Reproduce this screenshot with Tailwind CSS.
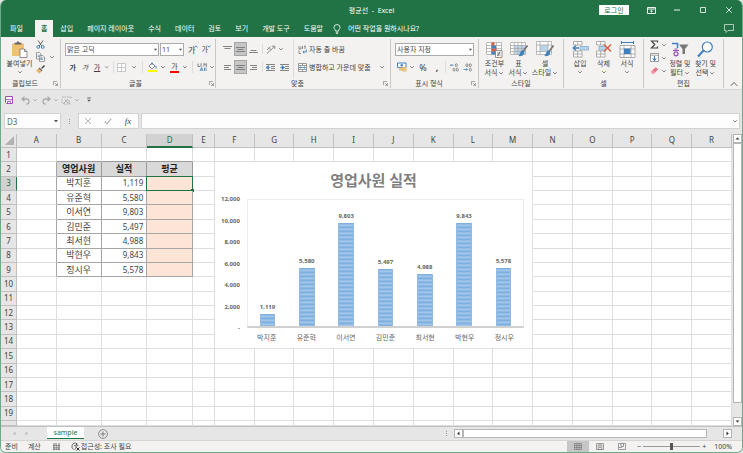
<!DOCTYPE html>
<html lang="ko">
<head>
<meta charset="utf-8">
<title>평균선 - Excel</title>
<script src="https://cdn.jsdelivr.net/npm/@tailwindcss/browser@4"></script>
</head>
<body class="h-screen overflow-hidden bg-[#dfe5e2] font-['Noto_Sans','Noto_Sans_CJK_KR',sans-serif] text-[7px] leading-[9px] text-[#444]">
<svg class="hidden">
  <symbol id="chev" viewBox="0 0 6 6"><path d="M1.2 2.2 3 4l1.8-1.8" fill="none" stroke="#777" stroke-width=".9"/></symbol>
  <symbol id="tri" viewBox="0 0 6 6"><path d="M1 2h4L3 4.500z" fill="#555"/></symbol>
  <symbol id="launch" viewBox="0 0 6 6"><path d="M.5 5V.500H5M2.500 2.500l2.500 2.500M5.400 2.500v3H2.500" fill="none" stroke="#777" stroke-width=".8"/></symbol>
  <symbol id="brush" viewBox="0 0 10 12"><path d="M9.500.5 5 6.500" stroke="#777" stroke-width="1.800"/><path d="M4.200 5.200C2 6 2.500 9 .3 11c3 .6 6-.6 6-4z" fill="#3f80bd"/></symbol>
</svg>
<div class="flex h-full flex-col overflow-hidden rounded-md border-x border-b border-[#6fa98c] bg-[#e6e6e6]">

  <header class="-mx-px bg-[#217346] text-white">
    <div class="grid h-5 grid-cols-[1fr_auto_1fr] items-center">
      <span></span>
      <h1 class="whitespace-pre">평균선  -  Excel</h1>
      <div class="flex items-center justify-end">
        <button class="mr-3 h-[10px] w-[30px] bg-white text-[#217346]">로그인</button>
        <button aria-label="리본 표시 옵션" class="grid h-4 w-5 place-items-center"><svg class="h-[7px] w-[9px]" viewBox="0 0 9 7"><path d="M.5.500h8v6h-8zM.5 2h8M4.500 5.500v-2M3.300 4.300l1.200-1 1.200 1" fill="none" stroke="#fff" stroke-width=".9"/></svg></button>
        <button aria-label="최소화" class="ml-[6px] grid h-4 w-5 place-items-center"><svg class="h-2 w-2" viewBox="0 0 8 8"><path d="M1 4h6" stroke="#fff" stroke-width=".9"/></svg></button>
        <button aria-label="최대화" class="ml-[6px] grid h-4 w-5 place-items-center"><svg class="h-2 w-2" viewBox="0 0 8 8"><path d="M1.500 1.500h5v5h-5z" fill="none" stroke="#fff" stroke-width=".8"/></svg></button>
        <button aria-label="닫기" class="ml-[6px] mr-1 grid h-4 w-5 place-items-center"><svg class="h-2 w-2" viewBox="0 0 8 8"><path d="m1.200 1.200 5.600 5.600m0-5.600L1.200 6.800" stroke="#fff" stroke-width=".8"/></svg></button>
      </div>
    </div>
    <nav class="flex h-[17px] items-stretch pl-[3px]">
      <button class="px-[7px]">파일</button>
      <button class="ml-[5px] bg-[#f3f2f1] px-[6px] font-bold text-[#217346]">홈</button>
      <button class="px-[7px]">삽입</button>
      <button class="px-[7px]">페이지 레이아웃</button>
      <button class="px-[7px]">수식</button>
      <button class="px-[7px]">데이터</button>
      <button class="px-[7px]">검토</button>
      <button class="px-[7px]">보기</button>
      <button class="px-[7px]">개발 도구</button>
      <button class="px-[7px]">도움말</button>
      <button class="ml-[3px] flex items-center gap-[7px]"><svg class="h-[10px] w-[8px]" viewBox="0 0 8 10"><path d="M2.500 7C2.500 5.500 1 5.200 1 3.500a3 3 0 0 1 6 0C7 5.200 5.500 5.500 5.500 7zM2.700 8.200h2.600M3 9.400h2" fill="none" stroke="#fff" stroke-width=".8"/></svg>어떤 작업을 원하시나요?</button>
      <button aria-label="메모" class="mr-2 ml-auto grid w-[12px] place-items-center"><svg class="h-[9px] w-[10px]" viewBox="0 0 10 9"><path d="M.5.500h9v6H4l-2 2v-2H.5z" fill="none" stroke="#cfe3d8" stroke-width=".8"/></svg></button>
    </nav>
  </header>

  <section aria-label="리본" class="flex h-[53px] shrink-0 items-stretch border-b border-[#d5d5d5] bg-[#f3f2f1] pt-[2px] pb-px whitespace-nowrap">
    <!-- 클립보드 -->
    <div class="flex w-[60px] shrink-0 flex-col border-r border-[#c8c8c8]">
      <div class="flex flex-1 pl-1">
        <button class="flex w-[29px] flex-col items-center pt-[2px]">
          <svg class="mb-px h-[17px] w-[17px]" viewBox="0 0 17 17"><path d="M1 2.500h12V15H1z" fill="#eec071"/><path d="M3.500 3.500V1.800H5.500C5.800 0 8.200 0 8.500 1.800h2v1.700z" fill="#666"/><path d="M9 8h4.500L16 10.500V16.500H9z" fill="#fff" stroke="#777" stroke-width=".8"/><path d="M13.500 8v2.500H16" fill="none" stroke="#777" stroke-width=".8"/></svg>
          <span>붙여넣기</span>
          <svg class="mt-px h-[6px] w-[6px]"><use href="#chev"/></svg>
        </button>
        <div class="ml-[2px] flex flex-col gap-[3px] pt-[1px]">
          <button aria-label="잘라내기" class="h-[9px] w-[9px]"><svg viewBox="0 0 9 9"><path d="m2 .5 3.800 5.500M7 .5 3.200 6" stroke="#555" stroke-width=".9"/><circle cx="2.300" cy="7" r="1.400" fill="none" stroke="#3f80bd"/><circle cx="6.700" cy="7" r="1.400" fill="none" stroke="#3f80bd"/></svg></button>
          <button aria-label="복사" class="flex items-center gap-1"><svg class="h-[10px] w-[9px]" viewBox="0 0 9 10"><path d="M.5.500h3L5 2v5H.5zM3.500 3.500h3L8.500 5v4.500h-5z" fill="#fff" stroke="#777" stroke-width=".7"/><path d="M1.500 3h2M1.500 4.500h1.500M4.700 6h2.500M4.700 7.500h2.500" stroke="#3f80bd" stroke-width=".7"/></svg><svg class="h-[6px] w-[6px]"><use href="#chev"/></svg></button>
          <button aria-label="서식 복사" class="h-[9px] w-[9px]"><svg viewBox="0 0 9 9"><path d="M8.500.5 5.500 3.500" stroke="#555" stroke-width="1.600"/><path d="m3.500 2.500 3 3-1 1-3-3z" fill="#666"/><path d="m2.300 3.500 3 3L3.500 8.800.2 5.500z" fill="#e9b25e"/></svg></button>
        </div>
      </div>
      <div class="flex h-[9px] items-center"><span class="flex-1 pr-1 text-center">클립보드</span><svg class="mr-[2px] h-[5px] w-[5px]"><use href="#launch"/></svg></div>
    </div>
    <!-- 글꼴 -->
    <div class="flex w-[155px] shrink-0 flex-col border-r border-[#c8c8c8]">
      <div class="flex h-[20px] items-center pt-[1px] pl-1">
        <label class="relative"><select aria-label="글꼴" class="block h-[13px] w-[94px] appearance-none border border-[#ababab] bg-white pl-[1px]"><option>맑은 고딕</option></select><svg class="pointer-events-none absolute top-[4px] right-[1px] h-[5px] w-[5px]"><use href="#tri"/></svg></label>
        <label class="relative ml-[1px]"><select aria-label="글꼴 크기" class="block h-[13px] w-6 appearance-none border border-[#ababab] bg-white pl-[1px]"><option>11</option></select><svg class="pointer-events-none absolute top-[4px] right-[1px] h-[5px] w-[5px]"><use href="#tri"/></svg></label>
        <button class="ml-[4px] flex items-start text-[8px]" aria-label="글꼴 크기 크게">가<svg class="-ml-px h-[3px] w-[4px]" viewBox="0 0 4 3"><path d="M.5 2.500 2 .8l1.500 1.700" fill="none" stroke="#3f80bd" stroke-width=".9"/></svg></button>
        <button class="ml-[3px] flex items-start" aria-label="글꼴 크기 작게">가<svg class="-ml-px h-[3px] w-[4px]" viewBox="0 0 4 3"><path d="M.5.500 2 2.200 3.500.5" fill="none" stroke="#3f80bd" stroke-width=".9"/></svg></button>
      </div>
      <div class="flex h-[16px] items-center pl-[6px]">
        <button class="w-[13px] font-bold">가</button>
        <button class="w-[14px] italic">가</button>
        <button class="w-[13px] underline">가</button>
        <svg class="mx-[1px] h-[6px] w-[6px]"><use href="#chev"/></svg>
        <span class="mx-[3px] h-3 w-px bg-[#dcdcdc]"></span>
        <button aria-label="테두리" class="flex items-center gap-[5px]"><svg class="h-[9px] w-[9px]" viewBox="0 0 9 9"><path d="M.5.500h8v8h-8zM4.500.5v8M.5 4.500h8" fill="#fff" stroke="#b5b5b5" stroke-width=".7"/></svg><svg class="h-[6px] w-[6px]"><use href="#chev"/></svg></button>
        <span class="mx-[5px] h-3 w-px bg-[#dcdcdc]"></span>
        <button aria-label="채우기 색" class="flex items-center gap-[3px]"><svg class="h-[10px] w-[9px]" viewBox="0 0 9 10"><path d="m4 1 3 3-3 3-3-3z" fill="#fff" stroke="#666" stroke-width=".8"/><path d="M4 3V.5M7 3.500c1 1 1.200 1.700 1.200 3" fill="none" stroke="#3f80bd"/><path d="M0 8h9v2H0z" fill="#ff0"/></svg><svg class="h-[6px] w-[6px]"><use href="#chev"/></svg></button>
        <button aria-label="글꼴 색" class="ml-1 flex items-center gap-[3px]"><span class="flex h-[11px] w-[9px] items-center justify-center border-b-2 border-[#f00]">가</span><svg class="h-[6px] w-[6px]"><use href="#chev"/></svg></button>
        <span class="mx-[4px] h-3 w-px bg-[#dcdcdc]"></span>
        <button aria-label="윗주 필드 표시" class="flex items-center gap-[2px]"><svg class="h-[9px] w-[10px]" viewBox="0 0 10 9"><path d="M1 .5v3h2M4 .3v3.500M6 1h2.500L6 3.500M9.300.3v3.500" fill="none" stroke="#666" stroke-width=".8"/><path d="m3 8 1.500-3.500L6 8M3.500 7h2M7.500 4.500V8M9 4.500V8" fill="none" stroke="#3f80bd" stroke-width=".8"/></svg><svg class="h-[6px] w-[6px]"><use href="#chev"/></svg></button>
      </div>
      <div class="mt-auto flex h-[9px] items-center"><span class="flex-1 pl-px text-center">글꼴</span><svg class="mr-[1px] h-[5px] w-[5px]"><use href="#launch"/></svg></div>
    </div>
    <!-- 맞춤 -->
    <div class="flex w-[175px] shrink-0 flex-col border-r border-[#c8c8c8]">
      <div class="flex flex-1">
        <div class="grid grid-cols-[13px_13px_13px] grid-rows-[14px_14px] content-start gap-y-1 pt-[3px] pl-[5px]">
          <button aria-label="위쪽 맞춤" class="grid place-items-center"><svg class="h-[9px] w-[9px]" viewBox="0 0 9 9"><path d="M0 1.500h9M1.500 3.500h6" stroke="#777" stroke-width=".9"/></svg></button>
          <button aria-label="가운데 맞춤" class="grid place-items-center border border-[#a5a5a5] bg-[#c6c6c6]"><svg class="h-[9px] w-[9px]" viewBox="0 0 9 9"><path d="M0 2.500h9M1.500 4.500h6M0 6.500h9" stroke="#777" stroke-width=".9"/></svg></button>
          <button aria-label="아래쪽 맞춤" class="grid place-items-center"><svg class="h-[9px] w-[9px]" viewBox="0 0 9 9"><path d="M1.500 5.500h6M0 7.500h9" stroke="#777" stroke-width=".9"/></svg></button>
          <button aria-label="왼쪽 맞춤" class="grid place-items-center"><svg class="h-[9px] w-[9px]" viewBox="0 0 9 9"><path d="M1 2.500h7M1 4.500h5M1 6.500h7" stroke="#777" stroke-width=".9"/></svg></button>
          <button aria-label="가로 가운데 맞춤" class="grid place-items-center border border-[#a5a5a5] bg-[#c6c6c6]"><svg class="h-[9px] w-[9px]" viewBox="0 0 9 9"><path d="M0 2.500h9M1.500 4.500h6M0 6.500h9" stroke="#777" stroke-width=".9"/></svg></button>
          <button aria-label="오른쪽 맞춤" class="grid place-items-center"><svg class="h-[9px] w-[9px]" viewBox="0 0 9 9"><path d="M1 2.500h7M3 4.500h5M1 6.500h7" stroke="#777" stroke-width=".9"/></svg></button>
        </div>
        <div class="ml-[2px] flex w-[32px] flex-col justify-start gap-2 border-r border-[#dcdcdc] pt-[5px]">
          <button aria-label="방향" class="flex h-[10px] items-center gap-[2px] border-l border-[#dcdcdc] pl-[3px]"><svg class="h-[9px] w-[10px]" viewBox="0 0 10 9"><path d="M1 8.500 8.500 1.500M6 1.200h2.800V4" fill="none" stroke="#777" stroke-width=".8"/><path d="m1 5 3.500-3.500M2 2.500l2 2M4 3.500 5.500 5" stroke="#888" stroke-width=".9"/></svg><svg class="h-[6px] w-[6px]"><use href="#chev"/></svg></button>
          <div class="flex h-[10px] items-center gap-[5px] border-l border-[#dcdcdc] pl-[3px]">
            <button aria-label="내어쓰기"><svg class="h-[9px] w-[9px]" viewBox="0 0 9 9"><path d="M0 1.500h9M5 3.500h4M5 5.500h4M0 7.500h9" stroke="#777" stroke-width=".9"/><path d="M0 4.500 2.500 2.500v4zM2 4.500h2.500" fill="#3f80bd" stroke="#3f80bd" stroke-width=".7"/></svg></button>
            <button aria-label="들여쓰기"><svg class="h-[9px] w-[9px]" viewBox="0 0 9 9"><path d="M0 1.500h9M5 3.500h4M5 5.500h4M0 7.500h9" stroke="#777" stroke-width=".9"/><path d="M4.500 4.500 2 2.500v4zM0 4.500h2.500" fill="#3f80bd" stroke="#3f80bd" stroke-width=".7"/></svg></button>
          </div>
        </div>
        <div class="flex flex-col gap-2 pt-[5px] pl-[4px]">
          <button class="flex h-[10px] items-center gap-[2px]"><svg class="h-[9px] w-[9px]" viewBox="0 0 9 9"><path d="M1 1v3h2V1.500M4.500 1v3M6 1.200h2M7 1v3M1 5.500v3h2" fill="none" stroke="#777" stroke-width=".8"/><path d="M8.300 4.500V7H5M6.200 5.800 4.900 7l1.300 1.200" fill="none" stroke="#3f80bd" stroke-width=".9"/></svg>자동 줄 바꿈</button>
          <button class="flex h-[10px] items-center gap-[2px]"><svg class="h-[9px] w-[9px]" viewBox="0 0 9 9"><path d="M.5.500h8v8h-8zM.5 2.500h8M.5 6.500h8M4.500.5v2M4.500 6.500v2" fill="#fff" stroke="#777" stroke-width=".7"/><path d="M1.500 4.500h6M2.700 3.500l-1.200 1 1.200 1M6.300 3.500l1.200 1-1.200 1" fill="none" stroke="#3f80bd" stroke-width=".8"/></svg>병합하고 가운데 맞춤<svg class="ml-[6px] h-[6px] w-[6px]"><use href="#chev"/></svg></button>
        </div>
      </div>
      <div class="flex h-[9px] items-center"><span class="flex-1 pr-1 text-center">맞춤</span><svg class="mr-[2px] h-[5px] w-[5px]"><use href="#launch"/></svg></div>
    </div>
    <!-- 표시 형식 -->
    <div class="flex w-[88px] shrink-0 flex-col border-r border-[#c8c8c8]">
      <div class="flex h-[20px] items-center pt-[1px] pl-1">
        <label class="relative"><select aria-label="표시 형식" class="block h-[13px] w-[79px] appearance-none border border-[#ababab] bg-white pl-[1px]"><option>사용자 지정</option></select><svg class="pointer-events-none absolute top-[4px] right-[1px] h-[5px] w-[5px]"><use href="#tri"/></svg></label>
      </div>
      <div class="flex h-[16px] items-center pl-[6px]">
        <button aria-label="회계 표시 형식" class="flex items-center gap-[2px]"><svg class="h-[10px] w-[10px]" viewBox="0 0 10 10"><path d="M.5 1h8.500v4.500H.5z" fill="#fff" stroke="#3f80bd"/><circle cx="4.700" cy="3.200" r="1.200" fill="#3f80bd"/><path d="M2 5.500h4v1.200H2zM2 7.200h4v1.200H2zM5.500 5h4v1.200h-4zM5.500 6.800h4V8h-4zM5.500 8.500h4v1h-4z" fill="#e9b25e"/></svg><svg class="h-[6px] w-[6px]"><use href="#chev"/></svg></button>
        <button class="ml-1 w-2 text-[9px]">%</button>
        <button class="ml-[6px] w-2 text-[9px] font-bold">,</button>
        <span class="mx-[4px] h-3 w-px bg-[#dcdcdc]"></span>
        <button aria-label="자릿수 늘림"><svg class="h-[9px] w-[9px]" viewBox="0 0 9 9"><path d="M.5 2.200h3M1.500 1.200l-1 1 1 1" fill="none" stroke="#3f80bd" stroke-width=".8"/><ellipse cx="6.300" cy="2.200" rx="1" ry="1.500" fill="none" stroke="#777" stroke-width=".8"/><ellipse cx="4" cy="6.700" rx="1" ry="1.500" fill="none" stroke="#777" stroke-width=".8"/><ellipse cx="7.300" cy="6.700" rx="1" ry="1.500" fill="none" stroke="#777" stroke-width=".8"/></svg></button>
        <button aria-label="자릿수 줄임" class="ml-1"><svg class="h-[9px] w-[9px]" viewBox="0 0 9 9"><ellipse cx="4" cy="2.200" rx="1" ry="1.500" fill="none" stroke="#777" stroke-width=".8"/><ellipse cx="7.300" cy="2.200" rx="1" ry="1.500" fill="none" stroke="#777" stroke-width=".8"/><ellipse cx="7.300" cy="6.700" rx="1" ry="1.500" fill="none" stroke="#777" stroke-width=".8"/><path d="M.5 6.500h4M3.300 5.300l1.200 1.200-1.200 1.200" fill="none" stroke="#3f80bd" stroke-width=".8"/></svg></button>
      </div>
      <div class="mt-auto flex h-[9px] items-center"><span class="flex-1 pr-1 text-center">표시 형식</span><svg class="mr-[2px] h-[5px] w-[5px]"><use href="#launch"/></svg></div>
    </div>
    <!-- 스타일 -->
    <div class="flex w-[85px] shrink-0 flex-col border-r border-[#c8c8c8]">
      <div class="flex flex-1 pl-[3px]">
        <button class="flex w-[25px] flex-col items-center pt-[2px]"><svg class="mb-px h-[17px] w-[17px]" viewBox="0 0 17 17"><path d="M.5 1.500h15v12H.5zM.5 4.500h15M.5 7.500h15M.5 10.500h15M5.500 1.500v12M10.500 1.500v12" fill="#fff" stroke="#aaa" stroke-width=".8"/><path d="M5.500 1.500h3v3h-3zM5.500 7.500h5v3h-5z" fill="#e0583a"/><path d="M5.500 4.500H10v3H5.500zM5.500 10.500h4v3h-4z" fill="#3f80bd"/><path d="M9.500 9.500h6.500v7H9.500z" fill="#fff" stroke="#777" stroke-width=".8"/><path d="M11 12h3.500M11 14h3.500M14 10.800l-2.500 4.400" stroke="#555" stroke-width=".7"/></svg><span>조건부</span><span class="flex items-center gap-[1px]">서식<svg class="h-[6px] w-[6px]"><use href="#chev"/></svg></span></button>
        <button class="flex w-[23px] flex-col items-center pt-[2px]"><svg class="mb-px h-[17px] w-[18px]" viewBox="0 0 18 17"><path d="M.5 1.500h15v12H.5z" fill="#fff"/><path d="M4.200 4.500h11.300v9H4.200z" fill="#bcd4ea"/><path d="M.5 1.500h15v12H.5zM.5 4.500h15M.5 7.500h15M.5 10.500h15M4.200 1.500v12M8 1.500v12M11.800 1.500v12" fill="none" stroke="#aaa" stroke-width=".8"/><use href="#brush" x="8" y="4" width="10" height="12"/></svg><span>표</span><span class="flex items-center gap-[1px]">서식<svg class="h-[6px] w-[6px]"><use href="#chev"/></svg></span></button>
        <button class="flex w-[30px] flex-col items-center pt-[2px]"><svg class="mb-px h-[17px] w-[18px]" viewBox="0 0 18 17"><path d="M.5.500h15v13H.5z" fill="#fff"/><path d="M4 4h8v6.500H4z" fill="#bcd4ea"/><path d="M.5.500h15v13H.5zM.5 4h15M.5 10.500h15M4 .5v13M12 .5v13" fill="none" stroke="#aaa" stroke-width=".8"/><use href="#brush" x="8" y="4" width="10" height="12"/></svg><span>셀</span><span class="flex items-center gap-[1px]">스타일<svg class="h-[6px] w-[6px]"><use href="#chev"/></svg></span></button>
      </div>
      <div class="h-[9px] text-center">스타일</div>
    </div>
    <!-- 셀 -->
    <div class="flex w-[80px] shrink-0 flex-col border-r border-[#c8c8c8]">
      <div class="flex flex-1 pl-[4px]">
        <button class="flex w-[24px] flex-col items-center pt-[2px]"><svg class="mb-px h-[17px] w-[17px]" viewBox="0 0 17 17"><path d="M1.500.500h8.500v3.500H1.500zM5.700.5V4M1.500 10h8.500v6H1.500zM5.700 10v6M1.500 13h8.500" fill="#fff" stroke="#999" stroke-width=".8"/><path d="M8 5.500h8.500v3.500H8z" fill="#bcd4ea" stroke="#7fa8cf" stroke-width=".8"/><path d="M7 7H1.500M4 4.500 1.200 7 4 9.500" fill="none" stroke="#3f80bd" stroke-width="1.300"/></svg><span>삽입</span><svg class="mt-[1px] h-[6px] w-[6px]"><use href="#chev"/></svg></button>
        <button class="flex w-[23px] flex-col items-center pt-[2px]"><svg class="mb-px h-[17px] w-[17px]" viewBox="0 0 17 17"><path d="M1.500.500h8.500v3.500H1.500zM5.700.5V4M1.500 10h8.500v6H1.500zM5.700 10v6M1.500 13h8.500" fill="#fff" stroke="#999" stroke-width=".8"/><path d="M4 5.500h7v3.500H4z" fill="#bcd4ea" stroke="#7fa8cf" stroke-width=".8"/><path d="m9 3.500 7 7m0-7-7 7" stroke="#e0583a" stroke-width="1.300"/></svg><span>삭제</span><svg class="mt-[1px] h-[6px] w-[6px]"><use href="#chev"/></svg></button>
        <button class="flex w-[24px] flex-col items-center pt-[2px]"><svg class="mb-px h-[17px] w-[17px]" viewBox="0 0 17 17"><path d="M1 4.500h15v12H1zM1 8h15M1 13h15M5 4.500v12M12 4.500v12" fill="#fff" stroke="#999" stroke-width=".8"/><path d="M5 7.500h6.500v5.500H5z" fill="#3f80bd"/><path d="M2.500 0v3M14.500 0v3M3 1.500h11" stroke="#3f80bd"/></svg><span>서식</span><svg class="mt-[1px] h-[6px] w-[6px]"><use href="#chev"/></svg></button>
      </div>
      <div class="h-[9px] text-center">셀</div>
    </div>
    <!-- 편집 -->
    <div class="flex w-[80px] shrink-0 flex-col border-r border-[#c8c8c8]">
      <div class="flex flex-1 pl-[6px]">
        <div class="flex flex-col gap-1 pt-[1px]">
          <button aria-label="합계" class="flex items-center gap-[2px]"><svg class="h-[9px] w-[9px]" viewBox="0 0 9 9"><path d="M7.500 2.500V1H1.500l3.300 3.500L1.500 8h6V6.500" fill="none" stroke="#444" stroke-width="1.200"/></svg><svg class="h-[6px] w-[6px]"><use href="#chev"/></svg></button>
          <button aria-label="채우기" class="flex items-center gap-[2px]"><svg class="h-[9px] w-[9px]" viewBox="0 0 9 9"><path d="M.5.500h8v8h-8zM.5 2.200h8" fill="#fff" stroke="#888" stroke-width=".8"/><path d="M4.500 3v4.500M2.700 5.500l1.800 2 1.800-2" fill="none" stroke="#3f80bd" stroke-width="1.100"/></svg><svg class="h-[6px] w-[6px]"><use href="#chev"/></svg></button>
          <button aria-label="지우기" class="flex items-center gap-[2px]"><svg class="h-[9px] w-[9px]" viewBox="0 0 9 9"><path d="m1 5.500 4.500-4.200 2.800 2L4 7.700H2z" fill="#e8788a"/><path d="m1 5.500 1.500-1.300 2.800 2.200L4 7.700H2z" fill="#f0a3b0"/></svg><svg class="h-[6px] w-[6px]"><use href="#chev"/></svg></button>
        </div>
        <button class="flex w-[26px] flex-col items-center pt-[2px]"><svg class="mb-px h-[17px] w-[18px]" viewBox="0 0 18 17"><path d="M1 2.500h5.500V7" fill="none" stroke="#3f80bd" stroke-width="1.500"/><path d="M2 9.500h6M3.500 8h3" stroke="#9a4fb5" stroke-width="1.100"/><circle cx="5" cy="12.800" r="2" fill="none" stroke="#9a4fb5" stroke-width="1.200"/><path d="M8 3.500h9.500L14 8v5h-2.500V8z" fill="#777"/></svg><span>정렬 및</span><span class="flex items-center gap-[1px]">필터<svg class="h-[6px] w-[6px]"><use href="#chev"/></svg></span></button>
        <button class="flex w-[25px] flex-col items-center pt-[2px]"><svg class="mb-px h-[17px] w-[17px]" viewBox="0 0 17 17"><circle cx="10.300" cy="6" r="5" fill="#fff" stroke="#3f80bd" stroke-width="1.200"/><path d="m6.500 9.500-5.500 6" stroke="#3f80bd" stroke-width="2"/></svg><span>찾기 및</span><span class="flex items-center gap-[1px]">선택<svg class="h-[6px] w-[6px]"><use href="#chev"/></svg></span></button>
      </div>
      <div class="h-[9px] text-center">편집</div>
    </div>
    <button aria-label="리본 축소" class="mr-1 ml-auto flex items-end pb-px"><svg class="h-[6px] w-[8px]" viewBox="0 0 8 6"><path d="M.8 4.800 4 1.500l3.200 3.300" fill="none" stroke="#555" stroke-width=".9"/></svg></button>
  </section>

  <div class="flex h-[23px] shrink-0 items-center pb-[3px] pl-1">
    <button aria-label="저장"><svg class="h-2 w-2" viewBox="0 0 8 8"><path d="M.5.500h7v7H1.500l-1-1z" fill="#fff" stroke="#9a4fb5"/><path d="M.5 3.700h7M2.500 7.500V5.500h3v2" fill="none" stroke="#9a4fb5" stroke-width=".9"/></svg></button>
    <button aria-label="실행 취소" class="ml-2 flex items-center gap-[2px]"><svg class="h-[9px] w-[9px]" viewBox="0 0 9 9"><path d="M3.500.7 1 3l2.500 2.300M1 3h4.500c3.500 0 3.500 4.800-.2 5" fill="none" stroke="#aaa" stroke-width="1.300"/></svg><svg class="h-[6px] w-[6px] opacity-50"><use href="#chev"/></svg></button>
    <button aria-label="다시 실행" class="ml-1 flex items-center gap-[2px]"><svg class="h-[9px] w-[9px]" viewBox="0 0 9 9"><path d="M5.500.700 8 3 5.500 5.300M8 3H3.500C0 3 0 7.800 3.700 8" fill="none" stroke="#aaa" stroke-width="1.300"/></svg><svg class="h-[6px] w-[6px] opacity-50"><use href="#chev"/></svg></button>
    <button aria-label="개체 선택" class="ml-[2px] flex items-center gap-[2px]"><svg class="h-[9px] w-[11px]" viewBox="0 0 11 9"><path d="M1 1h9M1 3v4M3 8h7M10 1v1" stroke="#aaa" stroke-width=".9" stroke-dasharray="1.500 1"/><path d="m2 8 3-3 2-2M4 3.500l3 3.500M8 4v4" stroke="#aaa" stroke-width=".9"/></svg><svg class="h-[6px] w-[6px] opacity-50"><use href="#chev"/></svg></button>
    <button aria-label="빠른 실행 도구 모음 사용자 지정" class="ml-[6px]"><svg class="h-[6px] w-[6px]" viewBox="0 0 6 6"><path d="M1.300 1h3.400" stroke="#555" stroke-width=".9"/><path d="M1.200 2.800h3.600L3 4.800z" fill="#555"/></svg></button>
  </div>

  <div class="flex h-[16px] shrink-0 items-stretch pl-[3px]">
    <label class="relative w-[57px]"><input aria-label="이름 상자" value="D3" class="h-full w-full border border-[#d2d2d2] bg-[#fdfdfd] pl-[2px] text-[8px] text-[#666]"><svg class="pointer-events-none absolute top-[5px] right-[2px] h-[6px] w-[6px]"><use href="#tri"/></svg></label>
    <span class="flex w-[17px] flex-col items-center justify-center gap-[1px]"><i class="size-px bg-[#999]"></i><i class="size-px bg-[#999]"></i><i class="size-px bg-[#999]"></i></span>
    <div class="flex w-[61px] items-center justify-between border border-[#d2d2d2] bg-[#fdfdfd] px-[5px]">
      <button aria-label="취소"><svg class="size-2" viewBox="0 0 8 8"><path d="m1 1 6 6m0-6L1 7" stroke="#aaa" stroke-width=".9"/></svg></button>
      <button aria-label="입력"><svg class="size-2" viewBox="0 0 8 8"><path d="m.7 4.500 2.300 2.300L7.300 1.500" fill="none" stroke="#aaa" stroke-width="1.100"/></svg></button>
      <button class="w-[10px] font-['Liberation_Serif',serif] text-[9px] italic">fx</button>
    </div>
    <label class="relative mr-[2px] ml-[2px] flex-1"><input aria-label="수식 입력줄" class="h-full w-full border border-[#d2d2d2] bg-[#fdfdfd] px-1 text-[8px]"><svg class="pointer-events-none absolute top-[5px] right-[2px] h-[6px] w-[6px]"><use href="#chev"/></svg></label>
  </div>

  <main class="flex min-h-0 flex-1 pt-[5px]">
    <table class="grid min-w-0 flex-1 grid-cols-[16px_395fr_450fr_455fr_455fr_220fr_repeat(13,397fr)] grid-rows-[14px_repeat(19,minmax(0,1fr))_5px] text-[8px] leading-[12px]">
      <thead class="contents"><tr id="cols" class="contents"></tr></thead>
      <tbody id="rows" class="contents"></tbody>
    </table>
    <div class="flex w-[10px] flex-col items-center">
      <button aria-label="위로" class="grid h-[9px] w-[9px] place-items-center border border-[#b5b5b5] bg-white"><svg class="h-[5px] w-[5px]" viewBox="0 0 5 5"><path d="M.5 3.500h4l-2-2z" fill="#333"/></svg></button>
      <div class="w-[9px] flex-1 border border-[#b5b5b5] bg-white"></div>
      <div class="h-[14px] w-[9px]"></div>
      <button aria-label="아래로" class="grid h-[9px] w-[9px] place-items-center border border-[#b5b5b5] bg-white"><svg class="h-[5px] w-[5px]" viewBox="0 0 5 5"><path d="M.5 1.500h4l-2 2z" fill="#333"/></svg></button>
    </div>
  </main>

  <div class="flex h-[14px] shrink-0 items-center border-t border-[#c0c0c0]">
    <span class="flex w-[46px] items-center gap-[9px] pl-[11px]"><svg class="h-[5px] w-1" viewBox="0 0 4 5"><path d="M3.500.5v4L1 2.500z" fill="#bbb"/></svg><svg class="h-[5px] w-1" viewBox="0 0 4 5"><path d="M.5.500v4L3 2.500z" fill="#bbb"/></svg></span>
    <button class="h-[12px] w-[37px] self-start border-b border-[#217346] bg-white text-[#217346]">sample</button>
    <button aria-label="새 시트" class="ml-[14px]"><svg class="size-[10px]" viewBox="0 0 10 10"><circle cx="5" cy="5" r="4.400" fill="none" stroke="#777" stroke-width=".8"/><path d="M5 2.500v5M2.500 5h5" stroke="#777" stroke-width=".9"/></svg></button>
    <span class="mr-[7px] ml-auto flex w-[1px] flex-col gap-[1px]"><i class="size-px bg-[#999]"></i><i class="size-px bg-[#999]"></i><i class="size-px bg-[#999]"></i></span>
    <div class="mr-[10px] flex h-[9px] w-3/8 items-stretch">
      <button aria-label="왼쪽으로" class="grid w-[9px] place-items-center border border-[#b5b5b5] bg-white"><svg class="h-[5px] w-[5px]" viewBox="0 0 5 5"><path d="M3.500.5v4l-2.300-2z" fill="#333"/></svg></button>
      <div class="flex-1 border border-[#b5b5b5] bg-white"></div>
      <div class="w-[16px]"></div>
      <button aria-label="오른쪽으로" class="grid w-[9px] place-items-center border border-[#b5b5b5] bg-white"><svg class="h-[5px] w-[5px]" viewBox="0 0 5 5"><path d="M1.500.5v4l2.300-2z" fill="#333"/></svg></button>
    </div>
  </div>

  <footer class="flex h-[12px] shrink-0 items-center border-t border-[#d5d5d5] bg-[#f3f2f1] pl-[4px]">
    <span>준비</span><span class="ml-[10px]">계산</span>
    <svg class="ml-[12px] h-[7px] w-[7px]" viewBox="0 0 7 7"><path d="M0 .5h4v1H0zM5 .5h2v1H5zM0 2h7v5H0z" fill="#777"/><path d="M0 3.500h7M0 5.200h7M2.300 2v5M4.600 2v5" stroke="#eee" stroke-width=".5"/></svg>
    <button class="ml-[11px] flex items-center gap-[1px]"><svg class="h-[9px] w-[9px]" viewBox="0 0 9 9"><path d="M4.500.8A3.700 3.700 0 0 0 2.500 7.500" fill="none" stroke="#555" stroke-width=".9"/><circle cx="5.500" cy="2" r="1" fill="#555"/><path d="M3 3.700h4.500M5 4v2L3.500 8" fill="none" stroke="#555" stroke-width=".8"/><path d="m5.500 5.500 3 3m0-3-3 3" stroke="#333" stroke-width="1"/></svg>접근성: 조사 필요</button>
    <button aria-label="기본" class="ml-auto grid h-full w-[22px] place-items-center bg-[#c6c6c6]"><svg class="h-[7px] w-[8px]" viewBox="0 0 8 7"><path d="M.5.500h7v6h-7zM.5 2.500h7M.5 4.500h7M2.800.5v6M5.200.5v6" fill="none" stroke="#777" stroke-width=".7"/></svg></button>
    <button aria-label="페이지 레이아웃" class="grid w-[22px] place-items-center"><svg class="h-[7px] w-[8px]" viewBox="0 0 8 7"><path d="M.5.500h7v6h-7zM2.200 1.800h3.600v4.700H2.200zM3 3h2M3 4.500h2" fill="none" stroke="#777" stroke-width=".7"/></svg></button>
    <button aria-label="페이지 나누기" class="grid w-[22px] place-items-center"><svg class="h-[7px] w-[8px]" viewBox="0 0 8 7"><path d="M.5.500h7v6h-7zM3 .5v3h2.500v-3M.5 4.500H4" fill="none" stroke="#777" stroke-width=".7"/></svg></button>
    <span class="ml-[2px] w-2 text-center">−</span>
    <span class="relative flex w-[57px] items-center"><input type="range" aria-label="확대/축소" min="0" max="100" value="50" class="absolute inset-0 h-[7px] w-full opacity-0"><i class="h-px flex-1 bg-[#999]"></i><i class="h-[7px] w-[3px] bg-[#555]"></i><i class="h-px flex-1 bg-[#999]"></i></span>
    <span class="w-2 text-center">+</span>
    <span class="mr-[10px] ml-[6px]">100%</span>
  </footer>
</div>

<template id="chart">
  <figure class="flex h-full flex-col bg-white pr-[8px] text-[6px] leading-[8px] text-[#666]">
    <figcaption class="flex h-[37px] items-center justify-center pb-[2px] pl-[8px] text-[15px] leading-[18px] font-bold text-[#808080]">영업사원 실적</figcaption>
    <div class="flex min-h-0 flex-1">
      <div id="axis" class="-my-1 flex w-[25px] flex-col justify-between text-right font-bold"></div>
      <div id="plot" class="ml-[7px] flex flex-1 items-stretch border border-b-2 border-[#ececec] border-b-[#d0d0d0]"></div>
    </div>
    <div id="names" class="flex h-[20px] items-center pl-8 text-[7px]"></div>
  </figure>
</template>

<script>
const people = [['박지훈', 1119], ['유준혁', 5580], ['이서연', 9803], ['김민준', 5497], ['최서현', 4988], ['박현우', 9843], ['정시우', 5578]];
const letters = 'ABCDEFGHIJKLMNOPQR'.split('');
const fmt = n => n.toLocaleString('en-US');

let head = '<th class="flex items-end justify-end border-r border-b border-[#c0c0c0] p-[2px]"><svg class="size-[9px]" viewBox="0 0 9 9"><path d="M9 0v9H0z" fill="#b2b2b2"/></svg></th>';
for (const l of letters) {
  head += l === 'D'
    ? '<th class="border-r border-b-2 border-[#c0c0c0] border-b-[#217346] bg-[#d2d2d2] text-center font-normal text-[#217346]">D</th>'
    : '<th class="border-r border-b border-[#c0c0c0] text-center font-normal">' + l + '</th>';
}
document.getElementById('cols').innerHTML = head;

let body = '';
for (let r = 1; r <= 20; r++) {
  const label = r < 20 ? r : '';
  body += '<tr class="contents">' + (r === 3
    ? '<th class="flex items-center justify-center border-r border-b border-[#c0c0c0] border-r-[#217346] bg-[#d2d2d2] font-normal text-[#217346]">3</th>'
    : '<th class="flex items-center justify-center overflow-hidden border-r border-b border-[#c0c0c0] font-normal">' + label + '</th>');
  for (let c = 0; c < 18; c++) {
    if (r >= 2 && r <= 14 && c >= 5 && c <= 12) {
      if (r === 2 && c === 5) body += '<td id="chartCell" class="col-start-7 col-end-15 row-start-3 row-end-16 min-h-0 border-r border-b border-[#e0e0e0]"></td>';
      continue;
    }
    const p = people[r - 3];
    if (r === 2 && c >= 1 && c <= 3) {
      body += '<th class="flex items-center justify-center border-r border-b border-[#9a9a9a] bg-[#d9d9d9] text-[9px] font-bold text-[#222]">' + ['영업사원', '실적', '평균'][c - 1] + '</th>';
    } else if (p && c === 1) {
      body += '<td class="flex items-center justify-center border-r border-b border-[#a6a6a6] bg-white text-[9px]">' + p[0] + '</td>';
    } else if (p && c === 2) {
      body += '<td class="flex items-center justify-end border-r border-b border-[#a6a6a6] bg-white pr-[3px]">' + fmt(p[1]) + '</td>';
    } else if (p && c === 3) {
      body += '<td class="relative border-r border-b border-[#a6a6a6] bg-[#fce4d6]">' + (r === 3 ? '<span class="absolute -inset-px border border-[#217346]"></span><span class="absolute -right-[2px] -bottom-[2px] size-[3px] bg-[#217346]"></span>' : '') + '</td>';
    } else if (r === 1 && c >= 1 && c <= 3) {
      body += '<td class="border-r border-b border-[#dedede] border-b-[#9a9a9a] bg-white"></td>';
    } else if (c === 0 && r >= 2 && r <= 9) {
      body += '<td class="border-r border-b border-[#dedede] border-r-[#a6a6a6] bg-white"></td>';
    } else {
      body += '<td class="border-r border-b border-[#dedede] bg-white"></td>';
    }
  }
  body += '</tr>';
}
document.getElementById('rows').innerHTML = body;

document.getElementById('chartCell').append(document.getElementById('chart').content.cloneNode(true));
document.getElementById('axis').innerHTML = [12000, 10000, 8000, 6000, 4000, 2000, 0].map(v => '<span>' + (v ? fmt(v) : '-') + '</span>').join('');
document.getElementById('plot').innerHTML = people.map(p =>
  '<div class="flex flex-1 flex-col items-center justify-end"><span class="pb-[3px] font-bold">' + fmt(p[1]) + '</span><div class="w-2/5 shrink-0 border-x border-[#8fbbe6] bg-[repeating-linear-gradient(#7db0e0_0_1px,#94bde6_1px_2px,#a3c6e8_2px_3px,#8cb8e3_3px_4px)]" style="height:' + p[1] / 120 + '%"></div></div>').join('');
document.getElementById('names').innerHTML = people.map(p => '<span class="flex-1 text-center">' + p[0] + '</span>').join('');
</script>
</body>
</html>
